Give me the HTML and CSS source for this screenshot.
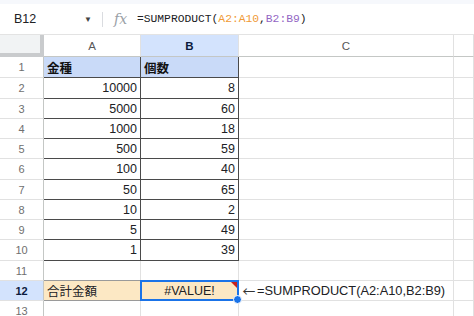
FILE: index.html
```html
<!DOCTYPE html>
<html lang="ja">
<head>
<meta charset="UTF-8" />
<meta name="viewport" content="width=device-width, initial-scale=1" />
<title>SUMPRODUCT</title>
<link rel="stylesheet" href="styles.css">
</head>
<body>

<!-- 数式バー -->
<div class="formula-bar">
  <div class="name-box">B12</div>
  <div class="name-arrow">&#9660;</div>
  <div class="sep"></div>
  <div class="fx">fx</div>
  <div class="formula">=SUMPRODUCT(<span class="ref-a">A2:A10</span>,<span class="ref-b">B2:B9</span>)</div>
</div>

<!-- シート -->
<div class="sheet">
  <div class="corner"></div>
  <div class="col-head">A</div>
  <div class="col-head active">B</div>
  <div class="col-head">C</div>
  <div class="col-head"></div>

  <div class="row-head">1</div>
  <div class="cell t head-cell">金種</div>
  <div class="cell t head-cell">個数</div>
  <div class="cell"></div><div class="cell"></div>

  <div class="row-head">2</div>
  <div class="cell t num">10000</div><div class="cell t num">8</div>
  <div class="cell"></div><div class="cell"></div>

  <div class="row-head">3</div>
  <div class="cell t num">5000</div><div class="cell t num">60</div>
  <div class="cell"></div><div class="cell"></div>

  <div class="row-head">4</div>
  <div class="cell t num">1000</div><div class="cell t num">18</div>
  <div class="cell"></div><div class="cell"></div>

  <div class="row-head">5</div>
  <div class="cell t num">500</div><div class="cell t num">59</div>
  <div class="cell"></div><div class="cell"></div>

  <div class="row-head">6</div>
  <div class="cell t num">100</div><div class="cell t num">40</div>
  <div class="cell"></div><div class="cell"></div>

  <div class="row-head">7</div>
  <div class="cell t num">50</div><div class="cell t num">65</div>
  <div class="cell"></div><div class="cell"></div>

  <div class="row-head">8</div>
  <div class="cell t num">10</div><div class="cell t num">2</div>
  <div class="cell"></div><div class="cell"></div>

  <div class="row-head">9</div>
  <div class="cell t num">5</div><div class="cell t num">49</div>
  <div class="cell"></div><div class="cell"></div>

  <div class="row-head">10</div>
  <div class="cell t num">1</div><div class="cell t num">39</div>
  <div class="cell"></div><div class="cell"></div>

  <div class="row-head">11</div>
  <div class="cell"></div><div class="cell"></div>
  <div class="cell"></div><div class="cell"></div>

  <div class="row-head active">12</div>
  <div class="cell total-label">合計金額</div>
  <div class="cell total-value">#VALUE!<span class="err"></span><span class="handle"></span></div>
  <div class="cell note"><span class="arrow">←</span>=SUMPRODUCT(A2:A10,B2:B9)</div>
  <div class="cell"></div>

  <div class="row-head">13</div>
  <div class="cell"></div><div class="cell"></div>
  <div class="cell"></div><div class="cell"></div>
</div>

</body>
</html>
```

FILE: styles.css
```css
/* --- Genel --- */
body {
  margin: 0;
  font-family: "Liberation Sans", "Noto Sans CJK JP", Arial, sans-serif;
  color: #202124;
  background: #fff;
  overflow: hidden;
}

/* Formül çubuğu */
.formula-bar {
  height: 30px;
  border-top: 4px solid #f6f8fc;
  border-bottom: 1px solid #e3e3e3;
  display: flex;
  align-items: center;
  font-size: 12.5px;
}
.name-box {
  width: 70px;
  padding-left: 14px;
}
.name-arrow {
  font-size: 8px;
  color: #444;
  width: 18px;
}
.sep {
  width: 1px;
  height: 15px;
  background: #dadce0;
  margin-right: 11px;
}
.fx {
  font-family: "DejaVu Serif", "Liberation Serif", serif;
  font-style: italic;
  color: #9aa0a6;
  font-size: 14px;
  width: 23px;
}
.formula {
  font-family: "Liberation Mono", "DejaVu Sans Mono", monospace;
  font-size: 11.3px;
  color: #202124;
}
.ref-a { color: #f09a35; }
.ref-b { color: #9366c4; }

/* Tablo */
.sheet {
  display: grid;
  grid-template-columns: 44px 97px 98px 215px 20px;
  grid-template-rows: 22px 21px 21px 20px 20px 20px 21px 20px 20px 20px 21px 20px 20px 20px;
  font-size: 12.5px;
}
.corner {
  background: #f1f3f4;
  border-right: 4px solid #c9cbcd;
  border-bottom: 4px solid #c9cbcd;
  box-sizing: border-box;
}
.col-head {
  box-sizing: border-box;
  border-right: 1px solid #e1e1e1;
  border-bottom: 1px solid #c4c7c5;
  display: flex;
  align-items: center;
  justify-content: center;
  font-size: 11.5px;
  color: #575757;
  background: #fff;
}
.col-head.active {
  background: #d3e3fd;
  color: #0b1a3c;
  font-weight: bold;
}
.row-head {
  box-sizing: border-box;
  border-right: 1px solid #c4c7c5;
  border-bottom: 1px solid #e1e1e1;
  display: flex;
  align-items: center;
  justify-content: center;
  font-size: 11px;
  color: #6f6f6f;
}
.row-head.active {
  background: #d3e3fd;
  color: #0b1a3c;
  font-weight: bold;
}
.cell {
  box-sizing: border-box;
  border-right: 1px solid #e1e1e1;
  border-bottom: 1px solid #e1e1e1;
  display: flex;
  align-items: center;
  padding: 0 3px;
  white-space: nowrap;
  position: relative;
}
.cell.t {
  border-right-color: #4a4a4a;
  border-bottom-color: #4a4a4a;
}
.head-cell {
  background: #c9daf8;
  font-weight: bold;
  color: #111;
}
.num {
  justify-content: flex-end;
}

/* Toplam satırı */
.total-label {
  background: #fce8c4;
  border-top: 1px solid #9a9a9a;
  border-bottom-color: #9a9a9a;
  margin-top: -1px;
}
.total-value {
  background: #fce8c4;
  justify-content: center;
  border: 2px solid #1a73e8;
  margin: -1px 0 0 -1px;
}
.err {
  position: absolute;
  top: 0;
  right: 0;
  border-top: 6px solid #c5221f;
  border-left: 6px solid transparent;
}
.handle {
  position: absolute;
  right: -5px;
  bottom: -5px;
  width: 7px;
  height: 7px;
  border-radius: 50%;
  background: #1a73e8;
  border: 1px solid #fff;
  z-index: 2;
}
.note {
  padding-left: 2px;
  font-size: 12.8px;
}
.arrow {
  font-family: "Noto Sans CJK JP", sans-serif;
  width: 16px;
  text-align: center;
  color: #333;
}
```
